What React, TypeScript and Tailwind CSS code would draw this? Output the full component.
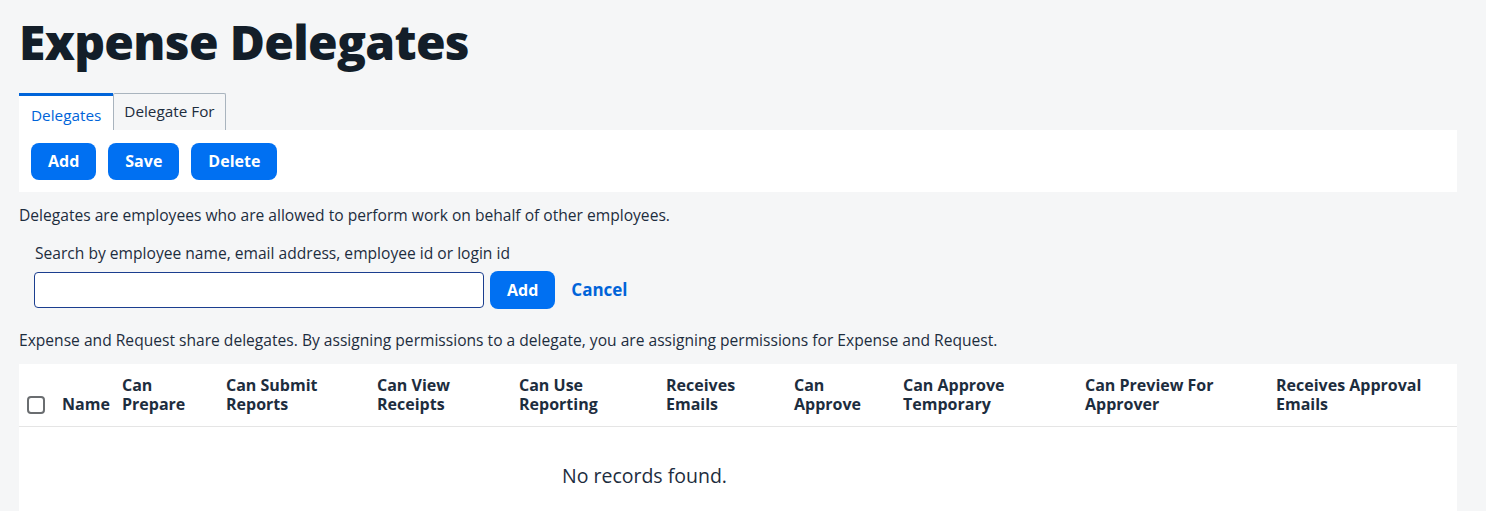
import { useState } from 'react';

const columns = [
  { label: 'Name', w: 'w-[60px]' },
  { label: 'Can\nPrepare', w: 'w-[104px]' },
  { label: 'Can Submit\nReports', w: 'w-[151px]' },
  { label: 'Can View\nReceipts', w: 'w-[142px]' },
  { label: 'Can Use\nReporting', w: 'w-[147px]' },
  { label: 'Receives\nEmails', w: 'w-[128px]' },
  { label: 'Can\nApprove', w: 'w-[109px]' },
  { label: 'Can Approve\nTemporary', w: 'w-[182px]' },
  { label: 'Can Preview For\nApprover', w: 'w-[191px]' },
  { label: 'Receives Approval\nEmails', w: 'flex-1' },
];

export default function App() {
  const [tab, setTab] = useState('delegates');
  const [query, setQuery] = useState('');

  return (
    <div
      className="min-h-screen bg-[#f5f6f7] text-[#1d2d3e] pl-[19px] pr-[29px]"
      style={{ fontFamily: '"Open Sans", "Noto Sans", Arial, sans-serif' }}
    >
      {/* title */}
      <h1 className="text-[48px] font-extrabold leading-none pt-[18px] pb-[27px] text-[#131e29] tracking-[-0.7px]">
        Expense Delegates
      </h1>

      {/* tabs */}
      <div className="flex items-end h-[37px]">
        <button
          onClick={() => setTab('delegates')}
          className={`h-[37px] px-[12px] pt-[4px] text-[15.3px] border-t-[3px] ${
            tab === 'delegates' ? 'bg-white text-[#0064d9] border-[#0064d9]' : 'bg-[#f5f6f7] border-[#a9b4be]'
          }`}
        >
          Delegates
        </button>
        <button
          onClick={() => setTab('for')}
          className="h-[37px] px-[10px] pb-[2px] text-[15.3px] bg-[#f5f6f7] border border-b-0 border-[#a9b4be] rounded-t-[2px]"
        >
          Delegate For
        </button>
      </div>

      {/* toolbar */}
      <div className="bg-white h-[62px] flex items-center gap-3 pl-3">
        {['Add', 'Save', 'Delete'].map((b) => (
          <button
            key={b}
            className="h-[37px] px-[17px] rounded-[8px] bg-[#0070f2] text-white text-[16px] font-bold"
          >
            {b}
          </button>
        ))}
      </div>

      <p className="text-[15.6px] leading-[20px] mt-[13px]">
        Delegates are employees who are allowed to perform work on behalf of other employees.
      </p>

      {/* search */}
      <div className="pl-[16px] mt-[18px]">
        <label className="block text-[15.6px] leading-[20px]">
          Search by employee name, email address, employee id or login id
        </label>
        <div className="flex items-center mt-[8px]">
          <input
            value={query}
            onChange={(e) => setQuery(e.target.value)}
            className="w-[450px] h-[36px] -ml-px rounded-[4px] border border-[#1b3e8f] bg-white px-1 outline-none text-[14px]"
          />
          <button className="ml-[6px] h-[38px] px-[17px] rounded-[8px] bg-[#0070f2] text-white text-[16px] font-bold">
            Add
          </button>
          <button className="ml-[16px] text-[17px] font-bold text-[#0064d9]">Cancel</button>
        </div>
      </div>

      <p className="text-[15.6px] leading-[20px] mt-[21px]">
        Expense and Request share delegates. By assigning permissions to a delegate, you are assigning permissions for
        Expense and Request.
      </p>

      {/* table */}
      <div className="bg-white mt-[14px]">
        <div className="flex items-center h-[63px] border-b border-[#e5e5e5]">
          <div className="w-[43px] pl-[8px] flex items-center">
            <span className="w-[18px] h-[18px] border-2 border-[#6a6d70] rounded-[4px] bg-white mt-[19px]" />
          </div>
          {columns.map((c) => (
            <div
              key={c.label}
              className={`${c.w} shrink-0 text-[16px] font-bold leading-[19px] whitespace-pre-line ${
                c.label.includes('\n') ? '' : 'mt-[19px]'
              }`}
            >
              {c.label}
            </div>
          ))}
        </div>
        <div className="h-[90px] pl-[543px] pt-[34px] text-[19.5px]">No records found.</div>
      </div>
    </div>
  );
}
